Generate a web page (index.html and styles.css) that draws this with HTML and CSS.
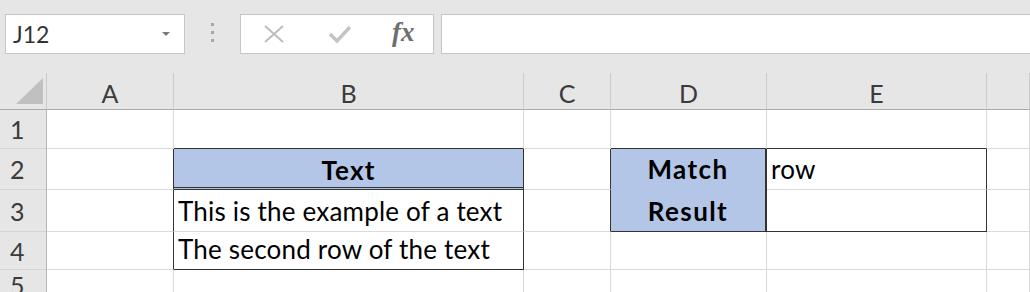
FILE: index.html
```html
<!DOCTYPE html>
<html>
<head>
	<meta charset="utf-8">
	<title>Match Result</title>
	<link rel="stylesheet" href="styles.css">
</head>
<body>
	<header class="toolbar">
		<div class="namebox">
			<span class="ref">J12</span>
			<span class="caret"></span>
		</div>
		<div class="grip"><i></i><i></i><i></i></div>
		<div class="fbuttons">
			<svg class="cancel" width="22" height="18" viewBox="0 0 22 18">
				<path d="M2 1 L20 17 M20 1 L2 17" stroke="#bdbdbd" stroke-width="2" fill="none"/>
			</svg>
			<svg class="enter" width="24" height="18" viewBox="0 0 24 18">
				<path d="M2 9 L9 16 L22 2" stroke="#c4c4c4" stroke-width="3.5" fill="none"/>
			</svg>
			<span class="fx">fx</span>
		</div>
		<div class="fbar"></div>
	</header>

	<main class="sheet">
		<!-- column headers -->
		<div class="hd corner">
			<svg width="46" height="36" viewBox="0 0 46 36"><polygon points="43,5 43,31 16,31" fill="#c0c0c0"/></svg>
		</div>
		<div class="hd col">A</div>
		<div class="hd col">B</div>
		<div class="hd col">C</div>
		<div class="hd col">D</div>
		<div class="hd col">E</div>
		<div class="hd col"></div>

		<!-- row 1 -->
		<div class="hd row">1</div>
		<div class="c"></div>
		<div class="c edge-b"></div>
		<div class="c"></div>
		<div class="c edge-b"></div>
		<div class="c edge-b"></div>
		<div class="c"></div>

		<!-- row 2 -->
		<div class="hd row">2</div>
		<div class="c edge-r"></div>
		<div class="c title">Text</div>
		<div class="c edge-r"></div>
		<div class="c label">Match<br>Result</div>
		<div class="c edge-r">row</div>
		<div class="c"></div>

		<!-- row 3 -->
		<div class="hd row">3</div>
		<div class="c edge-r"></div>
		<div class="c edge-r">This is the example of a text</div>
		<div class="c edge-r"></div>
		<div class="c edge-r edge-b"></div>
		<div class="c"></div>

		<!-- row 4 -->
		<div class="hd row">4</div>
		<div class="c edge-r"></div>
		<div class="c edge-r edge-b">The second row of the text</div>
		<div class="c"></div>
		<div class="c"></div>
		<div class="c"></div>
		<div class="c"></div>

		<!-- row 5 -->
		<div class="hd row">5</div>
		<div class="c"></div>
		<div class="c"></div>
		<div class="c"></div>
		<div class="c"></div>
		<div class="c"></div>
		<div class="c"></div>
	</main>
</body>
</html>
```

FILE: styles.css
```css
body {
	margin: 0;
	width: 1030px;
	height: 292px;
	overflow: hidden;
	background: #e6e6e6;
	font-family: Lato, "Liberation Sans", sans-serif;
	color: #000;
}

/* formula bar */
.toolbar {
	height: 73px;
	box-sizing: border-box;
	padding-top: 14px;
	display: flex;
	align-items: flex-start;
}
.namebox, .fbuttons, .fbar {
	height: 40px;
	box-sizing: border-box;
	background: #fff;
	border: 1px solid #c6c6c6;
}
.namebox {
	margin-left: 5px;
	width: 180px;
	display: flex;
	align-items: center;
	justify-content: space-between;
	padding: 0 14px 0 7px;
}
.ref {
	font-size: 23px;
	color: #333;
}
.caret {
	border-left: 4px solid transparent;
	border-right: 4px solid transparent;
	border-top: 4px solid #7a7a7a;
}
.grip {
	width: 55px;
	display: flex;
	flex-direction: column;
	align-items: center;
	gap: 5px;
	padding-top: 9px;
}
.grip i {
	width: 3px;
	height: 3px;
	background: #a8a8a8;
}
.fbuttons {
	width: 194px;
	display: flex;
	align-items: center;
	padding-left: 22px;
}
.cancel {
	margin-right: 43px;
}
.enter {
	margin-right: 40px;
}
.fx {
	font-family: "Liberation Serif", serif;
	font-style: italic;
	font-weight: bold;
	font-size: 27px;
	color: #6f6f6f;
	margin-top: -4px;
}
.fbar {
	flex: 1;
	margin-left: 7px;
	margin-right: -2px;
}

/* grid */
.sheet {
	display: grid;
	grid-template-columns: 47px 127px 350px 87px 156px 220px 1fr;
	grid-template-rows: 37px 39px 41px 42px 38px 1fr;
	height: 219px;
	background: #fff;
}
.sheet > div {
	box-sizing: border-box;
}
.hd {
	background: #e6e6e6;
	color: #3b3b3b;
	font-size: 25px;
	display: flex;
	align-items: center;
	justify-content: center;
}
.col {
	border-right: 1px solid #cbcbcb;
	border-bottom: 1px solid #ababab;
	padding-top: 4px;
}
.corner {
	border-right: 1px solid #cbcbcb;
	border-bottom: 1px solid #ababab;
	display: block;
}
.corner svg {
	display: block;
}
.row {
	border-right: 1px solid #b5b5b5;
	border-bottom: 1px solid #d4d4d4;
	justify-content: flex-start;
	padding-left: 10px;
}
.c {
	border-right: 1px solid #dadada;
	border-bottom: 1px solid #dadada;
	font-size: 26px;
	letter-spacing: 0.2px;
	display: flex;
	align-items: flex-end;
	padding: 0 4px 4px;
	white-space: nowrap;
}

/* bordered ranges */
.edge-r {
	border-right-color: #333;
}
.edge-b {
	border-bottom-color: #333;
}
.title {
	background: #b4c6e7;
	border-right-color: #333;
	border-bottom: 3px double #333;
	font-weight: bold;
	letter-spacing: 1.2px;
	justify-content: center;
	padding-bottom: 1px;
}
.label {
	grid-row: span 2;
	background: #b4c6e7;
	border-right: 2px solid #333;
	border-bottom-color: #333;
	font-weight: bold;
	letter-spacing: 1.4px;
	text-align: center;
	justify-content: center;
	align-items: center;
	white-space: normal;
	line-height: 42px;
	padding-top: 3px;
}
```
